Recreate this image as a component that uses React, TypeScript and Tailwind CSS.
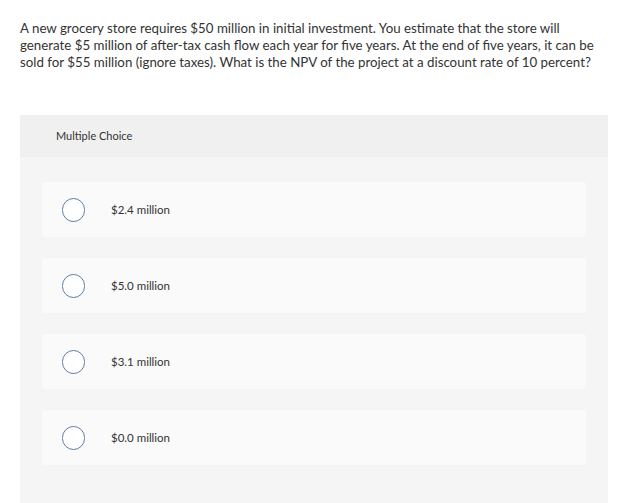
export default function App() {
  const options = ["$2.4 million", "$5.0 million", "$3.1 million", "$0.0 million"];
  return (
    <div className="h-[503px] w-[623px] overflow-hidden bg-white font-['Lato','Open_Sans',sans-serif] text-[#333]">
      <p className="pl-[20px] pt-[20px] text-[13.3px] leading-[17px]">
        A new grocery store requires $50 million in initial investment. You estimate that the store will
        <br />
        generate $5 million of after-tax cash flow each year for five years. At the end of five years, it can be
        <br />
        sold for $55 million (ignore taxes). What is the NPV of the project at a discount rate of 10 percent?
      </p>
      <div className="ml-[20px] mr-[15px] mt-[44px] h-[400px] bg-[#f5f5f5]">
        <div className="flex h-[42px] items-center bg-[#f0f0f0] pl-[36px] text-[11px]">Multiple Choice</div>
        <div className="flex flex-col gap-[21px] px-[22px] pt-[25px]">
          {options.map((o) => (
            <div key={o} className="flex h-[55px] items-center rounded-[2px] bg-[#fafafa] pl-[20px]">
              <span className="h-[24px] w-[23px] rounded-full border-[1.5px] border-[#5b7fa6] bg-white" />
              <span className="ml-[26px] text-[11.5px]">{o}</span>
            </div>
          ))}
        </div>
      </div>
    </div>
  );
}
